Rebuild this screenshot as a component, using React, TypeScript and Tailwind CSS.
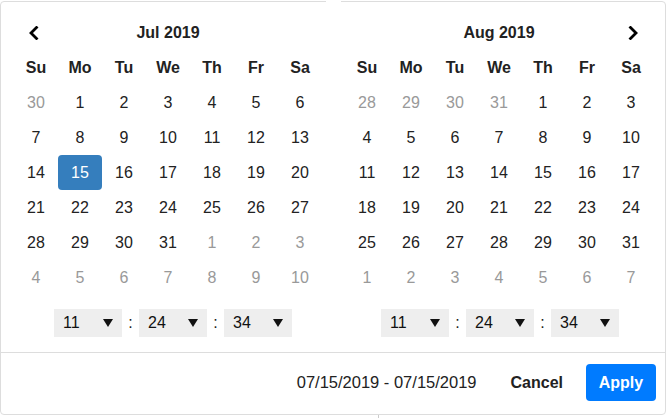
import React from 'react';

type Day = { d: number; off?: boolean };

const mk = (nums: number[], offFn: (i: number) => boolean): Day[] =>
  nums.map((d, i) => ({ d, off: offFn(i) }));

const range = (a: number, b: number) => Array.from({ length: b - a + 1 }, (_, i) => a + i);

const JUL: Day[] = mk(
  [30, ...range(1, 31), ...range(1, 10)],
  (i) => i === 0 || i > 31
);

const AUG: Day[] = mk(
  [...range(28, 31), ...range(1, 31), ...range(1, 7)],
  (i) => i < 4 || i > 34
);

const WEEK = ['Su', 'Mo', 'Tu', 'We', 'Th', 'Fr', 'Sa'];

const Chevron: React.FC<{ dir: 'left' | 'right' }> = ({ dir }) => (
  <svg width="11" height="14" viewBox="0 0 11 14" className="block">
    <polyline
      points={dir === 'left' ? '8.5,1.5 3,7 8.5,12.5' : '2.5,1.5 8,7 2.5,12.5'}
      fill="none"
      stroke="#000"
      strokeWidth="2.8"
      strokeLinecap="square"
      strokeLinejoin="miter"
    />
  </svg>
);

const TimeSelect: React.FC<{ value: string }> = ({ value }) => (
  <div className="w-[68px] h-[28px] bg-[#eeeeee] flex items-center justify-between pl-[9px] pr-[9px] text-[16px] text-[#111]">
    <span>{value}</span>
    <svg width="10" height="8" viewBox="0 0 10 8" className="block">
      <polygon points="0,0 10,0 5,8" fill="#111" />
    </svg>
  </div>
);

const Colon = () => <span className="w-[17px] text-center text-[16px] text-[#222]">:</span>;

const Calendar: React.FC<{
  title: string;
  days: Day[];
  left?: boolean;
  selected?: number;
  timeOffset: string;
}> = ({ title, days, left, selected, timeOffset }) => (
  <div className="w-[308px] flex flex-col">
    <div className="flex h-[35px] items-center">
      <div className="w-[44px] flex justify-center">
        {left && (
          <div className="-ml-[6px]">
            <Chevron dir="left" />
          </div>
        )}
      </div>
      <div className="w-[220px] text-center font-bold text-[16px] text-[#222]">{title}</div>
      <div className="w-[44px] flex justify-center">
        {!left && (
          <div className="ml-[5px]">
            <Chevron dir="right" />
          </div>
        )}
      </div>
    </div>
    <div className="grid grid-cols-7">
      {WEEK.map((w) => (
        <div key={w} className="h-[35px] flex items-center justify-center font-bold text-[16px] text-[#222]">
          {w}
        </div>
      ))}
      {days.map((day, i) => {
        const isSel = !day.off && day.d === selected;
        return (
          <div
            key={i}
            className={
              'h-[35px] flex items-center justify-center text-[16px] rounded-[4px] ' +
              (isSel ? 'bg-[#357ebd] text-white' : day.off ? 'text-[#999999]' : 'text-[#222]')
            }
          >
            {day.d}
          </div>
        );
      })}
    </div>
    <div className={'flex items-center mt-[14px] ' + timeOffset}>
      <TimeSelect value="11" />
      <Colon />
      <TimeSelect value="24" />
      <Colon />
      <TimeSelect value="34" />
    </div>
  </div>
);

export default function App() {
  return (
    <div className="w-[669px] h-[418px] bg-white overflow-hidden" style={{ fontFamily: '"Liberation Sans", Arial, sans-serif' }}>
      <div className="relative mt-px w-[666px] h-[414px] border border-[#dddddd] rounded-[4px] flex flex-col">
        <div className="absolute -top-px left-[325px] w-[15px] h-px bg-white" />
        <div className="flex pl-[13px] pt-[13px] gap-[23px]">
          <Calendar title="Jul 2019" days={JUL} left selected={15} timeOffset="ml-[40px]" />
          <Calendar title="Aug 2019" days={AUG} timeOffset="ml-[36px]" />
        </div>
        <div className="mt-[15px] border-t border-[#dddddd] flex items-center justify-end pr-[9px] pt-[11px]">
          <span className="text-[16.5px] text-[#222] mr-[34px]">07/15/2019 - 07/15/2019</span>
          <button className="text-[16px] font-bold text-[#222] mr-[23px]">Cancel</button>
          <button className="w-[70px] h-[37px] rounded-[4px] bg-[#007bff] text-white font-bold text-[16px]">
            Apply
          </button>
        </div>
      </div>
      <div className="w-[379px] h-[3px] border-r border-[#cccccc]" />
    </div>
  );
}
